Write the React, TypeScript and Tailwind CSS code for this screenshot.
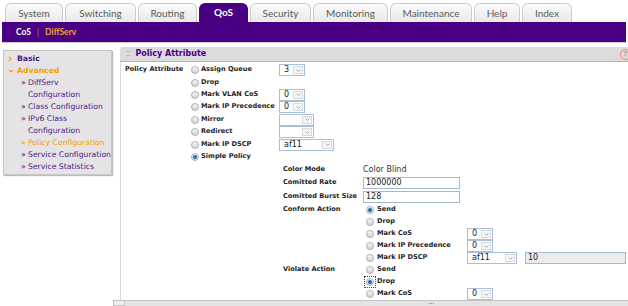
import React from "react";

const tabs = [
  { name: "System", w: "w-[58px]" },
  { name: "Switching", w: "w-[71px]" },
  { name: "Routing", w: "w-[59px]" },
  { name: "QoS", w: "w-[49px]", active: true },
  { name: "Security", w: "w-[61px]" },
  { name: "Monitoring", w: "w-[75px]" },
  { name: "Maintenance", w: "w-[82px]" },
  { name: "Help", w: "w-[46px]" },
  { name: "Index", w: "w-[50px]" },
];

const sideItems = [
  { text: "DiffServ", sub: true },
  { text: "Configuration" },
  { text: "Class Configuration", sub: true },
  { text: "IPv6 Class", sub: true },
  { text: "Configuration" },
  { text: "Policy Configuration", sub: true, active: true },
  { text: "Service Configuration", sub: true },
  { text: "Service Statistics", sub: true },
];

type Sel = { v: string; w: string };

const attrRows: { label: string; sel?: Sel; checked?: boolean }[] = [
  { label: "Assign Queue", sel: { v: "3", w: "w-[26px]" } },
  { label: "Drop" },
  { label: "Mark VLAN CoS", sel: { v: "0", w: "w-[26px]" } },
  { label: "Mark IP Precedence", sel: { v: "0", w: "w-[26px]" } },
  { label: "Mirror", sel: { v: "", w: "w-[35px]" } },
  { label: "Redirect", sel: { v: "", w: "w-[35px]" } },
  { label: "Mark IP DSCP", sel: { v: "af11", w: "w-[55px]" } },
  { label: "Simple Policy", checked: true },
];

const actionRows: { group?: string; label: string; sel?: Sel; checked?: boolean; focus?: boolean; extra?: string }[] = [
  { group: "Conform Action", label: "Send", checked: true },
  { label: "Drop" },
  { label: "Mark CoS", sel: { v: "0", w: "w-[26px]" } },
  { label: "Mark IP Precedence", sel: { v: "0", w: "w-[26px]" } },
  { label: "Mark IP DSCP", sel: { v: "af11", w: "w-[50px]" }, extra: "10" },
  { group: "Violate Action", label: "Send" },
  { label: "Drop", checked: true, focus: true },
  { label: "Mark CoS", sel: { v: "0", w: "w-[26px]" } },
];

function Radio({ checked, focus }: { checked?: boolean; focus?: boolean }) {
  return (
    <span className={`flex h-[10px] w-[10px] shrink-0 items-center justify-center ${focus ? "outline outline-1 outline-dotted outline-[#444]" : ""}`}>
      <span className="flex h-[8px] w-[8px] items-center justify-center rounded-full border border-[#b0b0b0] bg-linear-to-b from-[#f6f6f6] to-[#d4d4d4]">
        {checked && <span className="h-[4px] w-[4px] rounded-full bg-[#1d6cb5]" />}
      </span>
    </span>
  );
}

function Select({ sel }: { sel: Sel }) {
  return (
    <span className={`flex h-[12px] ${sel.w} shrink-0 border border-[#a9bfd8] bg-white font-normal`}>
      <span className="flex-1 pl-[4px] text-[8px] leading-[10px] text-[#222]">{sel.v}</span>
      <span className="m-[1px] flex w-[10px] items-center justify-center border border-[#d0d9e4] bg-[#f7f7f7]">
        <svg width="5" height="3" viewBox="0 0 5 3">
          <path d="M0.5 0.5 L2.5 2.5 L4.5 0.5" stroke="#9a9a9a" fill="none" strokeWidth="0.9" />
        </svg>
      </span>
    </span>
  );
}

function TextBox({ value, w, gray }: { value: string; w: string; gray?: boolean }) {
  return (
    <span className={`flex h-[12px] ${w} items-center border border-[#a3b7ce] pl-[2px] text-[8px] font-normal text-[#222] ${gray ? "bg-[#ececec]" : "bg-white"}`}>
      {value}
    </span>
  );
}

export default function App() {
  return (
    <div className="h-[306px] w-[628px] overflow-hidden bg-white font-['DejaVu_Sans',Verdana,sans-serif]">
      {/* tabs */}
      <div className="flex h-[22px] items-end gap-[2px] pl-[5px] font-['Lato',sans-serif]">
        {tabs.map((t) => (
          <div
            key={t.name}
            className={`flex h-[19px] ${t.w} items-center justify-center rounded-t-[6px] text-[10px] ${
              t.active
                ? "bg-[#4a0082] font-bold text-white"
                : "border border-b-0 border-[#cbcbcb] bg-linear-to-b from-[#fbfbfb] to-[#e9e9e9] text-[#5a5a5a]"
            }`}
          >
            {t.name}
          </div>
        ))}
      </div>
      <div className="mx-[2px] flex h-[20px] items-center gap-[6px] bg-[#4a0082] pl-[14px] font-['Lato',sans-serif] text-[8.5px] font-bold">
        <span className="text-white">CoS</span>
        <span className="font-normal text-[#9d7fc4]">|</span>
        <span className="text-[#f4a53a]">DiffServ</span>
      </div>
      <div className="mx-[2px] h-[1px] bg-[#c9c9c9]" />

      <div className="flex h-[257px]">
        {/* sidebar */}
        <div className="w-[120px] shrink-0 pl-[3px] pt-[7px]">
          <div className="w-[109px] border border-[#c6c6c6] bg-[#e5e3e5] pb-[1px] pl-[4px] pt-[2px] text-[7.7px] leading-[12px] text-[#4a1a88] shadow-[1px_1px_1px_#bcbcbc]">
            <div className="flex items-center">
              <span className="flex w-[9px] items-center">
                <svg width="4" height="6" viewBox="0 0 4 6">
                  <path d="M0.8 0.8 L3 3 L0.8 5.2" stroke="#f5a000" fill="none" strokeWidth="1.1" />
                </svg>
              </span>
              <span className="font-bold">Basic</span>
            </div>
            <div className="flex items-center">
              <span className="flex w-[9px] items-center">
                <svg width="6" height="4" viewBox="0 0 6 4">
                  <path d="M0.8 0.8 L3 3 L5.2 0.8" stroke="#f5a000" fill="none" strokeWidth="1.1" />
                </svg>
              </span>
              <span className="font-bold text-[#f5a000]">Advanced</span>
            </div>
            {sideItems.map((s, i) => (
              <div key={i} className={`flex pl-[13px] ${s.active ? "text-[#f5a000]" : ""}`}>
                <span className="w-[7px]">{s.sub ? "»" : ""}</span>
                <span>{s.text}</span>
              </div>
            ))}
          </div>
        </div>

        {/* content */}
        <div className="flex flex-1 flex-col">
          <div className="mt-[4px] flex h-[15px] shrink-0 items-center rounded-tl-[3px] border-b border-[#b4b4b4] bg-[#dcdadc]">
            <span className="pl-[6px] text-[8px] leading-none tracking-[-1px] text-[#a8a8a8]">::</span>
            <span className="pl-[6px] text-[8px] font-bold text-[#4a0082]">Policy Attribute</span>
            <span className="ml-auto mr-[-3px] flex h-[11px] w-[11px] items-center justify-center rounded-full border border-[#f08a5b] text-[7px] font-bold leading-none text-[#f08a5b]">
              ?
            </span>
          </div>
          <div className="flex-1 border-l border-[#d6d6d6] pl-[4px] pt-[2px] text-[6.6px] font-bold text-[#1e1e1e]">
            {attrRows.map((r, i) => (
              <div key={r.label} className="flex h-[12.4px] items-center">
                <span className="w-[65px] shrink-0">{i === 0 ? "Policy Attribute" : ""}</span>
                <span className="w-[11px] shrink-0">
                  <Radio checked={r.checked} />
                </span>
                <span className="w-[78px] shrink-0 whitespace-nowrap">{r.label}</span>
                {r.sel && <Select sel={r.sel} />}
              </div>
            ))}

            <div className="ml-[158px]">
              <div className="flex h-[13px] items-center">
                <span className="w-[80px] shrink-0">Color Mode</span>
                <span className="text-[8px] font-normal text-[#333]">Color Blind</span>
              </div>
              <div className="flex h-[14px] items-center">
                <span className="w-[80px] shrink-0">Comitted Rate</span>
                <TextBox value="1000000" w="w-[97px]" />
              </div>
              <div className="flex h-[14px] items-center">
                <span className="w-[80px] shrink-0">Comitted Burst Size</span>
                <TextBox value="128" w="w-[97px]" />
              </div>
              {actionRows.map((r, i) => (
                <div key={i} className="flex h-[12px] items-center">
                  <span className="w-[82px] shrink-0">{r.group ?? ""}</span>
                  <span className="w-[12px] shrink-0">
                    <Radio checked={r.checked} focus={r.focus} />
                  </span>
                  <span className="w-[90px] shrink-0 whitespace-nowrap">{r.label}</span>
                  {r.sel && <Select sel={r.sel} />}
                  {r.extra && (
                    <span className="ml-[8px]">
                      <TextBox value={r.extra} w="w-[101px]" gray />
                    </span>
                  )}
                </div>
              ))}
            </div>
          </div>
        </div>
      </div>

      {/* horizontal scrollbar */}
      <div className="flex h-[6px]">
        <span className="w-[113px] shrink-0" />
        <span className="w-[12px] shrink-0 border border-[#c2c2c2] bg-[#efefef]" />
        <span className="flex flex-1 items-center border-t border-[#c4c4c4] bg-[#e3e3e3] pl-[304px]">
          <svg width="5" height="2" viewBox="0 0 5 2">
            <rect x="0" y="0" width="1" height="1" fill="#888" />
            <rect x="2" y="0" width="1" height="1" fill="#888" />
            <rect x="4" y="0" width="1" height="1" fill="#888" />
          </svg>
        </span>
      </div>
    </div>
  );
}
